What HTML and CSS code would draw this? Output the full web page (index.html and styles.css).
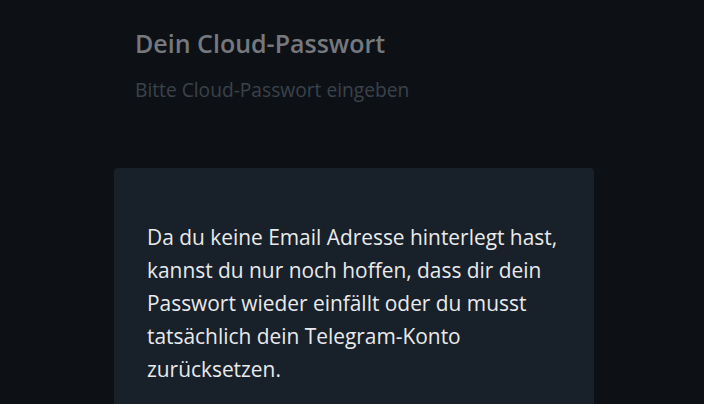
FILE: index.html
```html
<!DOCTYPE html>
<html lang="de">
<head>
<meta charset="utf-8">
<link rel="stylesheet" href="styles.css">
</head>
<body>
<main class="page">
  <header class="head">
    <h1 class="title">Dein Cloud-Passwort</h1>
    <p class="subtitle">Bitte Cloud-Passwort eingeben</p>
  </header>
  <section class="card">
    <p class="card-text">Da du keine Email Adresse hinterlegt hast, kannst du nur noch hoffen, dass dir dein Passwort wieder einfällt oder du musst tatsächlich dein Telegram-Konto zurücksetzen.</p>
  </section>
</main>
</body>
</html>
```
FILE: styles.css
```css
* { box-sizing: border-box; }
html, body {
  margin: 0;
  height: 100%;
  background: #0d1116;
  font-family: "Open Sans", "Noto Sans", sans-serif;
  overflow: hidden;
}
.page {
  display: flex;
  flex-direction: column;
  padding-top: 26px;
}
.head {
  padding-left: 135px;
}
.title {
  margin: 0;
  font-size: 25px;
  font-weight: 600;
  line-height: 34px;
  color: #75797e;
}
.subtitle {
  margin: 17px 0 0;
  font-size: 19.2px;
  line-height: 26px;
  color: #3b424a;
}
.card {
  margin: 65px 0 0 114px;
  width: 480px;
  height: 260px;
  background: #18202a;
  border-radius: 4px;
  padding: 53px 32px 0 33px;
}
.card-text {
  margin: 0;
  font-size: 20.9px;
  line-height: 33px;
  color: #e9eaeb;
}
```
